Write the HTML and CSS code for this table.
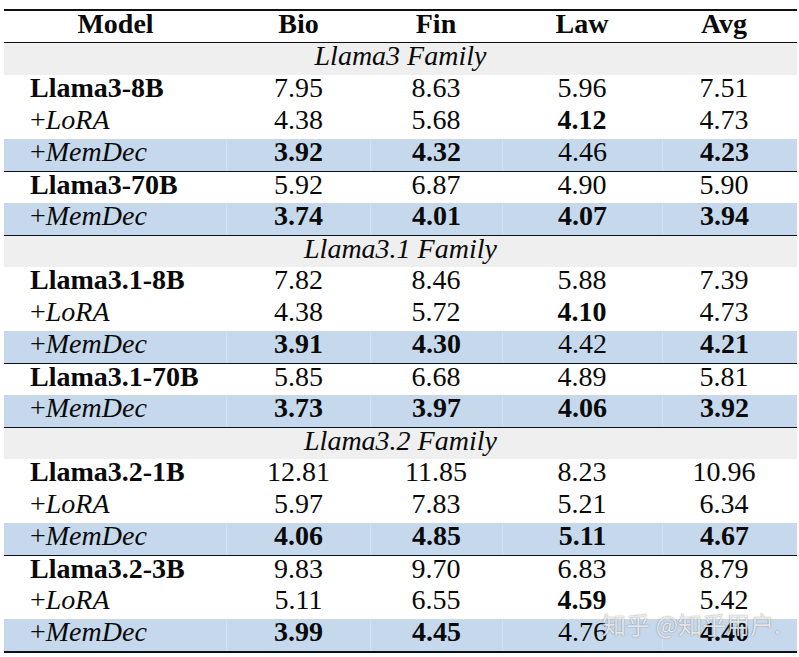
FILE: index.html
```html
<!DOCTYPE html>
<html>
<head>
<meta charset="utf-8">
<link rel="stylesheet" href="styles.css">
</head>
<body>
<div class="page">
  <div class="table">
    <div class="row head">
      <div class="c model-h">Model</div><div class="c">Bio</div><div class="c">Fin</div><div class="c">Law</div><div class="c avg">Avg</div>
    </div>

    <div class="row family"><div class="fam"><i>Llama3 Family</i></div></div>
    <div class="row"><div class="c m b">Llama3-8B</div><div class="c">7.95</div><div class="c">8.63</div><div class="c">5.96</div><div class="c avg">7.51</div></div>
    <div class="row"><div class="c m">+<i>LoRA</i></div><div class="c">4.38</div><div class="c">5.68</div><div class="c b">4.12</div><div class="c avg">4.73</div></div>
    <div class="row mem"><div class="c m">+<i>MemDec</i></div><div class="c b">3.92</div><div class="c b">4.32</div><div class="c">4.46</div><div class="c avg b">4.23</div></div>
    <div class="row rule"><div class="c m b">Llama3-70B</div><div class="c">5.92</div><div class="c">6.87</div><div class="c">4.90</div><div class="c avg">5.90</div></div>
    <div class="row mem"><div class="c m">+<i>MemDec</i></div><div class="c b">3.74</div><div class="c b">4.01</div><div class="c b">4.07</div><div class="c avg b">3.94</div></div>

    <div class="row family rule"><div class="fam"><i>Llama3.1 Family</i></div></div>
    <div class="row"><div class="c m b">Llama3.1-8B</div><div class="c">7.82</div><div class="c">8.46</div><div class="c">5.88</div><div class="c avg">7.39</div></div>
    <div class="row"><div class="c m">+<i>LoRA</i></div><div class="c">4.38</div><div class="c">5.72</div><div class="c b">4.10</div><div class="c avg">4.73</div></div>
    <div class="row mem"><div class="c m">+<i>MemDec</i></div><div class="c b">3.91</div><div class="c b">4.30</div><div class="c">4.42</div><div class="c avg b">4.21</div></div>
    <div class="row rule"><div class="c m b">Llama3.1-70B</div><div class="c">5.85</div><div class="c">6.68</div><div class="c">4.89</div><div class="c avg">5.81</div></div>
    <div class="row mem"><div class="c m">+<i>MemDec</i></div><div class="c b">3.73</div><div class="c b">3.97</div><div class="c b">4.06</div><div class="c avg b">3.92</div></div>

    <div class="row family rule"><div class="fam"><i>Llama3.2 Family</i></div></div>
    <div class="row"><div class="c m b">Llama3.2-1B</div><div class="c">12.81</div><div class="c">11.85</div><div class="c">8.23</div><div class="c avg">10.96</div></div>
    <div class="row"><div class="c m">+<i>LoRA</i></div><div class="c">5.97</div><div class="c">7.83</div><div class="c">5.21</div><div class="c avg">6.34</div></div>
    <div class="row mem"><div class="c m">+<i>MemDec</i></div><div class="c b">4.06</div><div class="c b">4.85</div><div class="c b">5.11</div><div class="c avg b">4.67</div></div>
    <div class="row rule"><div class="c m b">Llama3.2-3B</div><div class="c">9.83</div><div class="c">9.70</div><div class="c">6.83</div><div class="c avg">8.79</div></div>
    <div class="row"><div class="c m">+<i>LoRA</i></div><div class="c">5.11</div><div class="c">6.55</div><div class="c b">4.59</div><div class="c avg">5.42</div></div>
    <div class="row mem last"><div class="c m">+<i>MemDec</i></div><div class="c b">3.99</div><div class="c b">4.45</div><div class="c">4.76</div><div class="c avg b">4.40</div></div>
  </div>
  <div class="watermark">知乎 @知乎用户.</div>
</div>
</body>
</html>
```

FILE: styles.css
```css
html, body {
  margin: 0;
  padding: 0;
  background: #ffffff;
}

.page {
  position: relative;
  width: 799px;
  height: 657px;
  padding-top: 9px;
  box-sizing: border-box;
}

.table {
  margin-left: 4px;
  width: 793px;
  border-top: 2px solid #111;
  border-bottom: 2px solid #111;
  font-family: "Liberation Serif", "Times New Roman", serif;
  font-size: 28px;
  color: #0a0a0a;
}

.row {
  display: grid;
  grid-template-columns: 223px 143px 132px 160px 135px;
  height: 32px;
  box-sizing: border-box;
}

.row.head {
  border-bottom: 1px solid #111;
  font-weight: bold;
}

.row.rule {
  border-top: 1px solid #111;
}

.c {
  text-align: center;
  line-height: 26px;
  padding-bottom: 6px;
  white-space: nowrap;
}

.c.m {
  text-align: left;
  padding-left: 26px;
}

.c.model-h {
  text-align: center;
}

.c.avg {
  padding-right: 11px;
}

.b {
  font-weight: bold;
}

.row.family {
  display: block;
  background: #efefef;
}

.fam {
  text-align: center;
  line-height: 26px;
  padding-bottom: 6px;
}

.row.mem {
  background: #c6d9ec;
}

.row.mem .c + .c {
  border-left: 1px solid #d2e1f0;
}

.row.mem .c:nth-child(2) {
  margin-left: -1px;
}

.watermark {
  position: absolute;
  left: 602px;
  top: 609px;
  font-family: "Noto Sans CJK SC", "Noto Sans", sans-serif;
  font-size: 24px;
  line-height: 30px;
  color: rgba(255, 255, 255, 0.82);
  text-shadow: 0 0 1px rgba(0, 0, 0, 0.4), 0 0 2px rgba(0, 0, 0, 0.15);
  white-space: nowrap;
}
```
